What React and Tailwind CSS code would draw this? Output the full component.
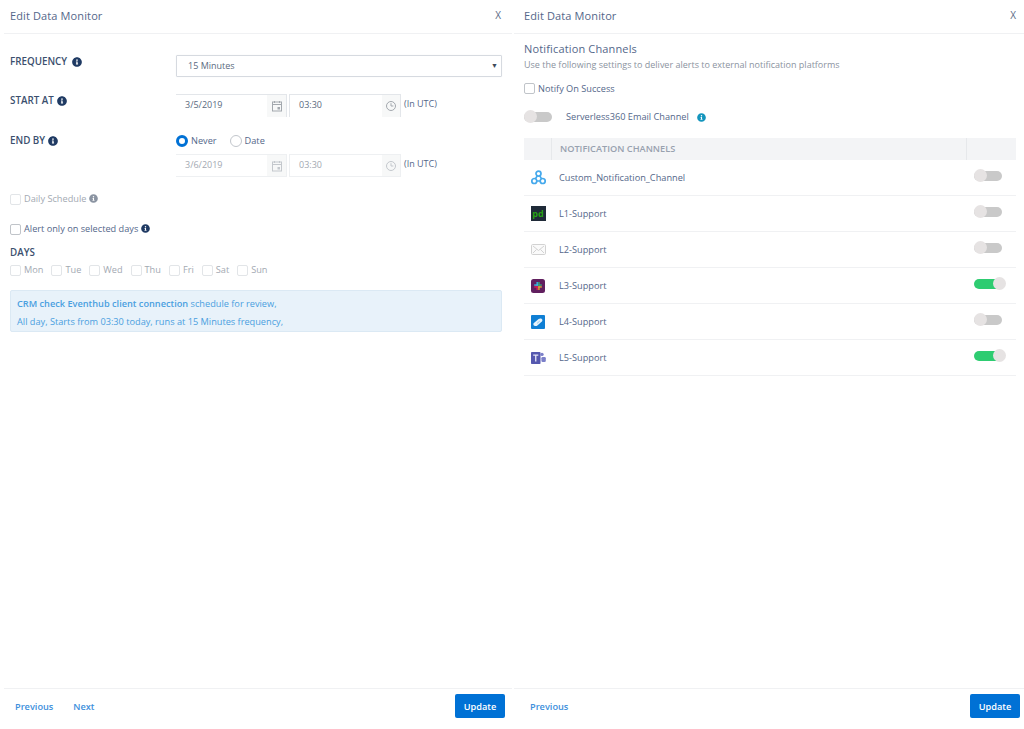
import React from "react";
import { FaInfoCircle } from "react-icons/fa";

const Info = ({ className = "text-[#1f3a63]", size = "text-[10px]" }) => <FaInfoCircle className={`inline-block ${size} ${className}`} />;

const Calendar = ({ muted }) => (
  <svg width="12" height="12" viewBox="0 0 12 12" fill="none" stroke={muted ? "#c4c8cd" : "#a3a8ae"} strokeWidth="1">
    <rect x="1.5" y="2" width="9" height="9" />
    <path d="M1.5 4.5h9M3.5 1v2M8.5 1v2" />
    <rect x="6.5" y="7" width="2.5" height="2.5" fill={muted ? "#c4c8cd" : "#a3a8ae"} stroke="none" />
  </svg>
);

const Clock = ({ muted }) => (
  <svg width="12" height="12" viewBox="0 0 12 12" fill="none" stroke={muted ? "#c4c8cd" : "#a3a8ae"} strokeWidth="1">
    <circle cx="6" cy="6" r="4.5" />
    <path d="M6 3.2V6h2.4" />
  </svg>
);

const Check = ({ muted }) => (
  <span className={`block w-[11px] h-[11px] shrink-0 rounded-[2px] border bg-white ${muted ? "border-[#e2e5e8]" : "border-[#c0c4c9]"}`} />
);

const DateTime = ({ date, muted }) => {
  const text = muted ? "text-[#a3a9b2]" : "text-[#5a6a80]";
  const edge = muted ? "border-[#eef0f2]" : "border-[#e3e6ea]";
  const box = `h-[23px] flex items-stretch border-t border-r ${edge} text-[9px] ${text}`;
  return (
    <div className="flex items-start">
      <div className={`${box} w-[111px] ${muted ? "border-b" : ""}`}>
        <span className="flex-1 pl-[9px] pt-[3px]">{date}</span>
        <span className="w-[19px] bg-[#f7f8f8] flex items-center justify-center"><Calendar muted={muted} /></span>
      </div>
      <div className={`${box} ml-[2px] w-[112px] border-l ${muted ? "border-b" : ""}`}>
        <span className="flex-1 pl-[9px] pt-[3px]">03:30</span>
        <span className="w-[18px] bg-[#f7f8f8] flex items-center justify-center"><Clock muted={muted} /></span>
      </div>
      <span className="ml-[3px] pt-[3px] text-[9px] text-[#54678a]">(In UTC)</span>
    </div>
  );
};

const Toggle = ({ on }) => (
  <span className="relative block w-[28px] h-[10px]">
    <span className={`absolute left-0 right-0 top-0 bottom-0 rounded-full ${on ? "bg-[#2ecc71]" : "bg-[#c9c9c9]"}`} />
    <span className={`absolute -top-[2px] w-[13px] h-[13px] rounded-full bg-[#e6e3e3] ${on ? "left-[19px]" : "left-0"}`} />
  </span>
);

const Hook = () => (
  <svg width="15" height="15" viewBox="0 0 15 15" fill="none" stroke="#45a9ec" strokeWidth="1.7">
    <circle cx="7.5" cy="3.6" r="2.5" />
    <circle cx="3.3" cy="11" r="2.5" />
    <circle cx="11.7" cy="11" r="2.5" />
    <path d="M6.2 5.8 4.4 9M8.8 5.8l1.8 3.2M5.8 11h3.4" />
  </svg>
);

const Slack = () => (
  <svg width="14" height="14" viewBox="0 0 14 14">
    <rect width="14" height="14" rx="2.5" fill="#611f5f" />
    <rect x="3.2" y="5.4" width="3.6" height="1.3" fill="#36c5f0" />
    <rect x="5.5" y="3" width="1.3" height="3.7" fill="#36c5f0" />
    <rect x="7.3" y="5.4" width="3.5" height="1.3" fill="#2eb67d" />
    <rect x="7.3" y="3" width="1.3" height="3.7" fill="#2eb67d" />
    <rect x="3.2" y="7.3" width="3.6" height="1.3" fill="#e01e5a" />
    <rect x="5.5" y="7.3" width="1.3" height="3.7" fill="#e01e5a" />
    <rect x="7.3" y="7.3" width="3.5" height="1.3" fill="#ecb22e" />
    <rect x="7.3" y="7.3" width="1.3" height="3.7" fill="#ecb22e" />
  </svg>
);

const Pager = () => (
  <span className="w-[15px] h-[15px] bg-[#1f2a38] flex items-center justify-center text-[9px] leading-none font-bold text-[#27a312]">pd</span>
);

const MailIcon = () => (
  <svg width="15" height="11" viewBox="0 0 15 11" fill="#fafafa" stroke="#d2d2d2" strokeWidth="1">
    <rect x="0.5" y="0.5" width="14" height="10" rx="1.2" />
    <path d="M2 2l5.5 4.5L13 2M2 9l3.5-3.5M13 9 9.5 5.5" fill="none" />
  </svg>
);

const Opsgenie = () => (
  <svg width="14" height="14" viewBox="0 0 14 14">
    <rect width="14" height="14" rx="1" fill="#0f7fd4" />
    <path d="M2.6 8.3 7.6 4c1.3-1 3.9-.6 3.8 1.2 0 .8-.5 1.3-1.1 1.8L6.4 10.4c-1.1.9-3.3.6-3.9-.5-.2-.5-.2-1.1.1-1.6z" fill="#e6f3fc" />
    <path d="M6 8.4 8.8 6" stroke="#7fbde9" strokeWidth="0.8" />
  </svg>
);

const Teams = () => (
  <svg width="15" height="14" viewBox="0 0 15 14">
    <rect x="0" y="1" width="9.5" height="12" rx="0.8" fill="#5558af" />
    <path d="M2.2 3.6h5.1v1.2H5.4v5.6H4.1V4.8H2.2z" fill="#e6e6f5" />
    <circle cx="11" cy="3.4" r="1.7" fill="#7b7fc9" />
    <rect x="10.4" y="6" width="4.4" height="5" rx="1.2" fill="#7b7fc9" />
  </svg>
);

const channels = [
  { name: "Custom_Notification_Channel", icon: <Hook /> },
  { name: "L1-Support", icon: <Pager /> },
  { name: "L2-Support", icon: <MailIcon /> },
  { name: "L3-Support", icon: <Slack />, on: true },
  { name: "L4-Support", icon: <Opsgenie /> },
  { name: "L5-Support", icon: <Teams />, on: true },
];

const days = ["Mon", "Tue", "Wed", "Thu", "Fri", "Sat", "Sun"];

const Title = () => <span className="text-[11px] tracking-[0.12px] text-[#54678a]">Edit Data Monitor</span>;
const Close = () => <span className="text-[10px] text-[#5b6b85] -mt-[2px]">X</span>;
const Update = () => (
  <button className="mt-[5px] w-[50px] h-[24px] pt-[1px] rounded-[2px] bg-[#0071d5] text-white text-[9.2px] font-semibold">Update</button>
);

export default function App() {
  return (
    <div className="w-[1024px] h-[729px] bg-white flex overflow-hidden font-['Open_Sans',sans-serif]">
      <div className="w-[512px] h-full pl-[4px] flex flex-col">
        <div className="h-[34px] shrink-0 border-b border-[#f0f1f3] flex items-center justify-between pl-[6px] pr-[11px]">
          <Title />
          <Close />
        </div>
        <div className="pl-[6px] pr-[10px] flex-1 flex flex-col">
          <div className="mt-[21px] grid grid-cols-[166px_326px] h-[22px]">
            <div className="text-[9.8px] font-semibold text-[#3b4f6e] flex items-center gap-[5px] h-[13px] pt-[1px]">FREQUENCY <Info /></div>
            <div className="h-[22px] border border-[#d6dae0] rounded-[1px] flex items-center justify-between pl-[11px] pr-[3px] text-[9px] text-[#5a6a80] shadow-[0_0_1px_#e3e6ea]">
              <span>15 Minutes</span>
              <span className="text-[7px] text-[#3f4a59]">▼</span>
            </div>
          </div>
          <div className="mt-[17px] grid grid-cols-[166px_326px]">
            <div className="text-[9.8px] font-semibold text-[#3b4f6e] flex items-center gap-[3px] h-[13px] pt-[1px]">START AT <Info /></div>
            <DateTime date="3/5/2019" />
          </div>
          <div className="mt-[17px] grid grid-cols-[166px_326px]">
            <div className="text-[9.8px] font-semibold text-[#3b4f6e] flex items-center gap-[3px] h-[13px] pt-[1px]">END BY <Info /></div>
            <div>
              <div className="flex items-center h-[13px] text-[9.2px] text-[#54678a]">
                <span className="block w-[12px] h-[12px] rounded-full border-[3px] border-[#0071d5] bg-white" />
                <span className="ml-[3px]">Never</span>
                <span className="block ml-[13px] w-[12px] h-[12px] rounded-full border border-[#c2c6cc] bg-white" />
                <span className="ml-[3px]">Date</span>
              </div>
              <div className="mt-[7px]"><DateTime date="3/6/2019" muted /></div>
            </div>
          </div>
          <div className="mt-[17px] flex items-center gap-[3px] h-[11px] text-[9.2px] text-[#a3a9b2]">
            <Check muted /> <span className="-mt-[1px]">Daily Schedule</span> <span className="-mt-[4px]"><Info size="text-[9px]" className="text-[#8b94a2]" /></span>
          </div>
          <div className="mt-[19px] flex items-center gap-[3px] h-[11px] text-[9.2px] text-[#54678a]">
            <Check /> <span className="-mt-[1px]">Alert only on selected days</span> <span className="-mt-[4px]"><Info size="text-[9px]" /></span>
          </div>
          <div className="mt-[11px] h-[13px] text-[9.8px] font-semibold text-[#3b4f6e] leading-[13px]">DAYS</div>
          <div className="mt-[6px] flex items-center gap-[8px] h-[11px] text-[9.2px] text-[#a3a9b2]">
            {days.map((d) => (
              <span key={d} className="flex items-center gap-[3px]">
                <Check muted />
                <span className="-mt-[1px]">{d}</span>
              </span>
            ))}
          </div>
          <div className="mt-[14px] w-[492px] h-[42px] rounded-[2px] border border-[#dbe9f4] bg-[#e8f2fa] px-[6px] pt-[4px] text-[9.2px] leading-[18px] text-[#4a9fe0]">
            <div><span className="font-semibold">CRM check Eventhub client connection</span> schedule for review,</div>
            <div>All day, Starts from 03:30 today, runs at 15 Minutes frequency,</div>
          </div>
        </div>
        <div className="h-[41px] shrink-0 border-t border-[#f0f1f3] flex items-start justify-between pl-[11px] pr-[7px]">
          <div className="flex gap-[20px] text-[9.2px] font-semibold text-[#3d8fdc] pt-[11px]">
            <span>Previous</span>
            <span>Next</span>
          </div>
          <Update />
        </div>
      </div>
      <div className="w-[512px] h-full pl-[2px] flex flex-col">
        <div className="h-[34px] shrink-0 border-b border-[#f0f1f3] flex items-center justify-between pl-[10px] pr-[8px]">
          <Title />
          <Close />
        </div>
        <div className="pl-[10px] pr-[8px] flex-1">
          <div className="mt-[7px] text-[11px] tracking-[0.15px] leading-[15px] text-[#54678a]">Notification Channels</div>
          <div className="mt-[2px] text-[9px] leading-[13px] text-[#8b93a0]">Use the following settings to deliver alerts to external notification platforms</div>
          <div className="mt-[12px] flex items-center gap-[3px] h-[11px] text-[9.2px] text-[#54678a]">
            <Check /> <span>Notify On Success</span>
          </div>
          <div className="mt-[16px] flex items-center h-[14px] text-[9.2px] text-[#54678a]">
            <Toggle />
            <span className="ml-[14px]">Serverless360 Email Channel</span>
            <span className="ml-[8px] flex"><Info size="text-[9px]" className="text-[#1495bd]" /></span>
          </div>
          <div className="mt-[14px] h-[22px] bg-[#f3f4f6] flex text-[9.2px] font-semibold text-[#98a1af]">
            <div className="w-[28px] border-r border-[#e6e8eb]" />
            <div className="flex-1 pl-[8px] flex items-center">NOTIFICATION CHANNELS</div>
            <div className="w-[50px] border-l border-[#e6e8eb]" />
          </div>
          {channels.map((c) => (
            <div key={c.name} className="h-[36px] border-b border-[#f0f1f3] flex items-center text-[9.2px] text-[#54678a]">
              <span className="w-[28px] flex justify-center items-center">{c.icon}</span>
              <span className="ml-[7px] flex-1 mt-[1px]">{c.name}</span>
              <span className="mr-[14px] -mt-[3px]"><Toggle on={c.on} /></span>
            </div>
          ))}
        </div>
        <div className="h-[41px] shrink-0 border-t border-[#f0f1f3] flex items-start justify-between pl-[16px] pr-[4px]">
          <div className="text-[9.2px] font-semibold text-[#3d8fdc] pt-[11px]">Previous</div>
          <Update />
        </div>
      </div>
    </div>
  );
}
